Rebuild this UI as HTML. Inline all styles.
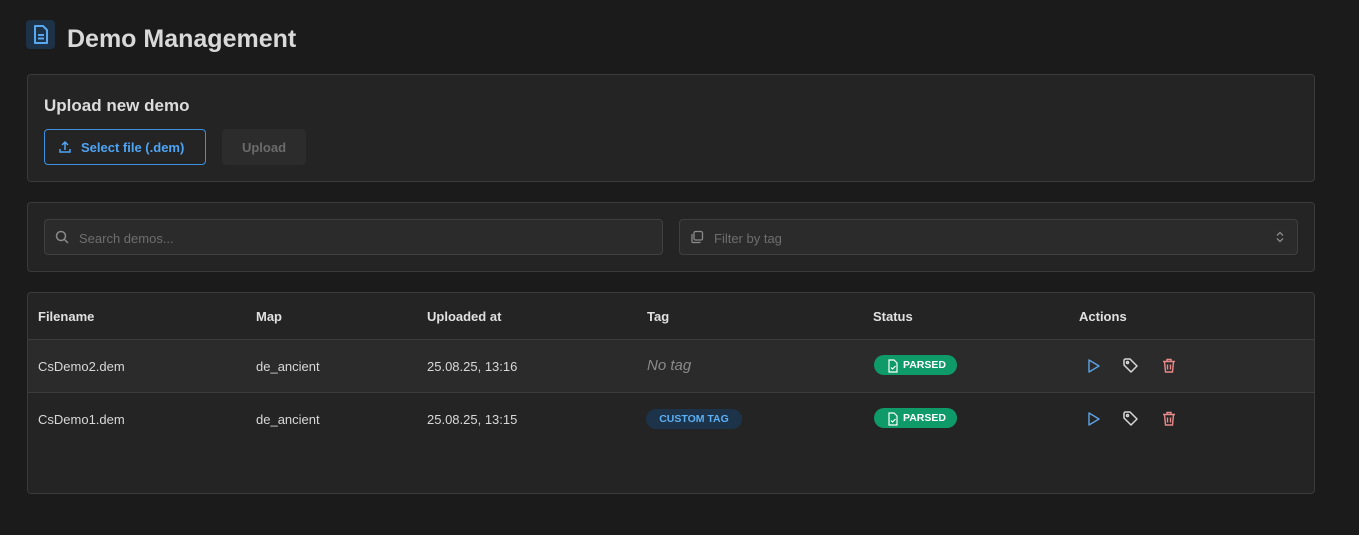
<!DOCTYPE html>
<html><head><meta charset="utf-8"><style>
*{box-sizing:border-box;margin:0;padding:0}
body{width:1359px;height:535px;background:#1b1b1b;font-family:"Liberation Sans",sans-serif;color:#e6e6e6;position:relative;overflow:hidden}
.abs{position:absolute}
.card{position:absolute;left:27px;width:1288px;background:#242424;border:1px solid #3a3a3a;border-radius:4px}
.th{position:absolute;top:16px;font-weight:bold;font-size:13px;color:#e0e0e0}
.td{position:absolute;font-size:13px;color:#d8d8d8}
.badge{position:absolute;background:#0f9a6a;color:#fff;font-weight:bold;font-size:10.5px;border-radius:10px;height:20px;width:83px;line-height:20px;padding-left:29px}
</style></head><body>
<div class="abs" style="left:26px;top:20px;width:29px;height:29px;background:#1e3247;border-radius:4px"></div>
<svg class="abs" style="left:31px;top:24px" width="20" height="21" viewBox="0 0 20 21" fill="none" stroke="#5aa9f0" stroke-width="2" stroke-linejoin="round"><path d="M4 2h8l4 4v13H4z"/><path d="M7 11h6M7 14.5h6"/></svg>
<div class="abs" style="left:67px;top:25px;font-size:25px;font-weight:bold;color:#d9d9d9">Demo Management</div>

<div class="card" style="top:74px;height:108px">
  <div class="abs" style="left:16px;top:21px;font-size:17px;font-weight:bold;color:#dcdcdc">Upload new demo</div>
  <div class="abs" style="left:16px;top:54px;width:162px;height:36px;border:1px solid #3d8fe0;border-radius:4px;color:#4ea4f5;font-size:13px;font-weight:bold;line-height:35px;padding-left:36px">Select file (.dem)</div>
  <svg class="abs" style="left:30px;top:65px" width="14" height="14" viewBox="0 0 14 14" fill="none" stroke="#4ea4f5" stroke-width="1.5"><path d="M7 10V2M4 5l3-3 3 3M2 9v3h10V9"/></svg>
  <div class="abs" style="left:194px;top:54px;width:84px;height:36px;background:#2c2c2c;border-radius:4px;color:#6b6b6b;font-size:13px;font-weight:bold;line-height:37px;text-align:center">Upload</div>
</div>

<div class="card" style="top:202px;height:70px">
  <div class="abs" style="left:16px;top:16px;width:619px;height:36px;background:#2b2b2b;border:1px solid #404040;border-radius:4px"></div>
  <svg class="abs" style="left:27px;top:27px" width="14" height="14" viewBox="0 0 14 14" fill="none" stroke="#8a8a8a" stroke-width="1.5"><circle cx="6" cy="6" r="4.5"/><path d="M9.5 9.5L13 13"/></svg>
  <div class="abs" style="left:51px;top:28px;font-size:13px;color:#6e6e6e">Search demos...</div>
  <div class="abs" style="left:651px;top:16px;width:619px;height:36px;background:#2b2b2b;border:1px solid #404040;border-radius:4px"></div>
  <svg class="abs" style="left:662px;top:27px" width="14" height="14" viewBox="0 0 14 14" fill="none" stroke="#8a8a8a" stroke-width="1.3"><rect x="4" y="1.5" width="8.5" height="8.5" rx="1.5"/><path d="M2 4v7.5a1 1 0 0 0 1 1h7.5"/></svg>
  <div class="abs" style="left:686px;top:28px;font-size:13px;color:#6e6e6e">Filter by tag</div>
  <svg class="abs" style="left:1247px;top:28px" width="10" height="12" viewBox="0 0 10 12" fill="none" stroke="#8a8a8a" stroke-width="1.3"><path d="M2 4.5l3-3 3 3M2 7.5l3 3 3-3"/></svg>
</div>

<div class="card" style="top:292px;height:202px;overflow:hidden">
  <div class="th" style="left:10px">Filename</div>
  <div class="th" style="left:228px">Map</div>
  <div class="th" style="left:399px">Uploaded at</div>
  <div class="th" style="left:619px">Tag</div>
  <div class="th" style="left:845px">Status</div>
  <div class="th" style="left:1051px">Actions</div>
  <div class="abs" style="left:0;top:46px;width:1288px;height:54px;background:#2b2b2b;border-top:1px solid #3c3c3c;border-bottom:1px solid #3c3c3c"></div>
  <div class="td" style="left:10px;top:66px">CsDemo2.dem</div>
  <div class="td" style="left:228px;top:66px">de_ancient</div>
  <div class="td" style="left:399px;top:66px">25.08.25, 13:16</div>
  <div class="td" style="left:619px;top:64px;font-style:italic;font-size:15px;color:#8a8a8a">No tag</div>
  <div class="badge" style="left:846px;top:62px">PARSED</div>
  <div class="td" style="left:10px;top:119px">CsDemo1.dem</div>
  <div class="td" style="left:228px;top:119px">de_ancient</div>
  <div class="td" style="left:399px;top:119px">25.08.25, 13:15</div>
  <div class="abs" style="left:618px;top:116px;width:96px;height:20px;background:#1d3349;border-radius:10px;color:#5cb0f5;font-weight:bold;font-size:10.5px;line-height:20px;text-align:center">CUSTOM TAG</div>
  <div class="badge" style="left:846px;top:115px">PARSED</div>
</div>
<svg width="0" height="0" style="position:absolute"><defs>
<g id="ic">
<path d="M2 2l10 6-10 6z" fill="none" stroke="#5aa3e6" stroke-width="1.4" stroke-linejoin="round"/>
<g transform="translate(36,0)" fill="none" stroke="#d8d8d8" stroke-width="1.5" stroke-linejoin="round"><path d="M1 2v5l7 7 6-6-7-7H2z"/><circle cx="4.5" cy="4.5" r="1"/></g>
<g transform="translate(75,0)" fill="none" stroke="#e88a8a" stroke-width="1.4"><path d="M1 3.5h12M5 3.5V1.5h4v2M2.5 3.5l1 10.5h7l1-10.5M5.5 6.5v5M8.5 6.5v5"/></g>
<g transform="translate(-200,1)" fill="none" stroke="#fff" stroke-width="1.2"><path d="M2 1h5l3 3v9H2z"/><path d="M4 8.5l1.5 1.5 3-3"/></g>
</g></defs></svg>
<svg class="abs" style="left:1087px;top:358px" width="110" height="16" overflow="visible"><use href="#ic"/></svg>
<svg class="abs" style="left:1087px;top:411px" width="110" height="16" overflow="visible"><use href="#ic"/></svg>
</body></html>
